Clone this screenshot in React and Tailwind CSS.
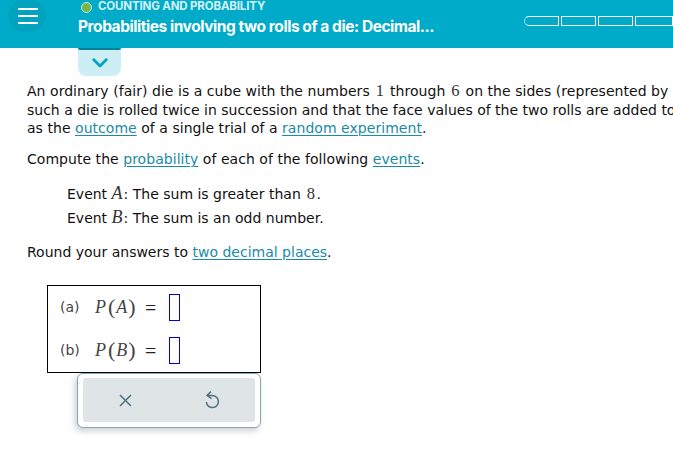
import React from "react";

const Link = ({ children }) => (
  <span className="text-[#1a8ba3] underline underline-offset-2 decoration-1">{children}</span>
);
const M = ({ children, i, cls }) => (
  <span className={`font-['Liberation_Serif',serif] text-[16.5px] text-[#333] ${i ? "italic" : ""} ${cls || ""}`}>{children}</span>
);

const Cell = () => <span className="inline-block w-[11px] h-[27px] border border-[#0000e0] bg-white" />;

const Paren = ({ children }) => (
  <span className="text-[22px] leading-none -mt-[2px]">{children}</span>
);

function Row({ label, v }) {
  return (
    <div className="flex items-center h-[27px] text-[#444]">
      <span className="w-[35px] text-[14px]">({label})</span>
      <span className="w-[50px] font-['Liberation_Serif',serif] text-[18px] text-[#444] flex items-center">
        <span className="italic mr-[2px]">P</span>
        <Paren>(</Paren>
        <span className="italic mx-[1px]">{v}</span>
        <Paren>)</Paren>
      </span>
      <span className="w-[24px] font-['Liberation_Serif',serif] text-[20px] text-[#222]">=</span>
      <Cell />
    </div>
  );
}

export default function App() {
  return (
    <div className="relative w-[673px] h-[463px] overflow-hidden bg-white font-['DejaVu_Sans',sans-serif] text-[#111]">
      <header className="h-[48px] bg-[#00abc9] flex">
        <div className="w-[78px] shrink-0 pl-[8px]">
          <div className="w-[38px] h-[33px] -mt-[1px] pl-[2px] rounded-full bg-[#02a3bf] flex flex-col items-center justify-center gap-[5px]">
            <span className="w-[20px] h-[2px] bg-white" />
            <span className="w-[20px] h-[2px] bg-white" />
            <span className="w-[20px] h-[2px] bg-white" />
          </div>
        </div>
        <div className="flex-1 min-w-0 font-['Inter',sans-serif]">
          <div className="flex items-center h-[14px] ml-[3px] gap-[6px]">
            <span className="w-[11px] h-[11px] rounded-full bg-[#74b843] border border-[#d5eef3]" />
            <span className="text-[11.5px] font-bold tracking-[-0.15px] text-[#d6f1f6] leading-none whitespace-nowrap">COUNTING AND PROBABILITY</span>
          </div>
          <div className="mt-[2px] text-[15.5px] font-bold tracking-[-0.45px] text-white leading-[22px] whitespace-nowrap">
            Probabilities involving two rolls of a die: Decimal...
          </div>
        </div>
        <div className="w-[149px] shrink-0 flex gap-[2px] pt-[16px]">
          <span className="w-[38px] h-[10px] border border-white rounded-l-[5px] border-l-[#8ed9e8]" />
          <span className="w-[39px] h-[10px] border border-white" />
          <span className="w-[38px] h-[10px] border border-white" />
          <span className="w-[38px] h-[10px] border border-white shrink-0" />
        </div>
      </header>

      <div className="ml-[78px] w-[43px] h-[28px] bg-[#cdeef4] rounded-b-[8px] relative flex items-center justify-center">
        <span className="absolute top-0 left-0 right-0 h-[2px] bg-[#058299] rounded-b-sm" />
        <svg width="16" height="10" viewBox="0 0 16 10" fill="none" className="mt-[2px]">
          <path d="M1.8 1.8 8 8l6.2-6.2" stroke="#00a3c2" strokeWidth="2.8" strokeLinecap="round" strokeLinejoin="round" />
        </svg>
      </div>

      <main className="pl-[27px] mt-[5px] text-[14px] whitespace-nowrap">
        <p className="leading-[19px] tracking-[0.04px]">
          An ordinary (fair) die is a cube with the numbers <M cls="mx-[1.5px]">1</M> through <M cls="mx-[1.5px]">6</M> on the sides (represented by
        </p>
        <p className="leading-[19px]">such a die is rolled twice in succession and that the face values of the two rolls are added to</p>
        <p className="leading-[17px] tracking-[0.04px]">as the <Link>outcome</Link> of a single trial of a <Link>random experiment</Link>.</p>
        <p className="leading-[19px] mt-[13px] tracking-[0.04px]">Compute the <Link>probability</Link> of each of the following <Link>events</Link>.</p>
        <div className="pl-[40px] mt-[13px]">
          <p className="leading-[23px]">Event <M i cls="text-[18px] mr-[1px]">A</M>: The sum is greater than <M cls="mx-[1.5px]">8</M>.</p>
          <p className="leading-[23px]">Event <M i cls="text-[18px] mr-[1px]">B</M>: The sum is an odd number.</p>
        </div>
        <p className="leading-[19px] mt-[13px]">Round your answers to <Link>two decimal places</Link>.</p>
      </main>

      <section className="ml-[47px] mt-[23px] w-[214px] h-[88px] border border-black pl-[12px] pt-[8px] flex flex-col gap-[16px]">
        <Row label="a" v="A" />
        <Row label="b" v="B" />
      </section>

      <div className="ml-[77px] w-[184px] h-[55px] border border-[#8aa6b0] rounded-[6px] bg-white px-[5px] pt-[4px] pb-[5px] shadow-[-2px_3px_6px_rgba(80,100,110,0.3)]">
        <div className="h-full bg-[#dfe5e7] rounded-[3px] flex items-center">
          <div className="flex-1 flex justify-center pr-[2px]">
            <svg width="15" height="15" viewBox="0 0 15 15" fill="none">
              <path d="M2 2l11 11M13 2 2 13" stroke="#4f7280" strokeWidth="1.5" />
            </svg>
          </div>
          <div className="flex-1 flex justify-center">
            <svg width="15" height="18" viewBox="0 0 15 18" fill="none">
              <path d="M6 .6 2 4.4l4.6 3.2M2.4 4.6H7.4a6 6 0 1 1-6 6.4" stroke="#4f7280" strokeWidth="1.5" />
            </svg>
          </div>
        </div>
      </div>
    </div>
  );
}
